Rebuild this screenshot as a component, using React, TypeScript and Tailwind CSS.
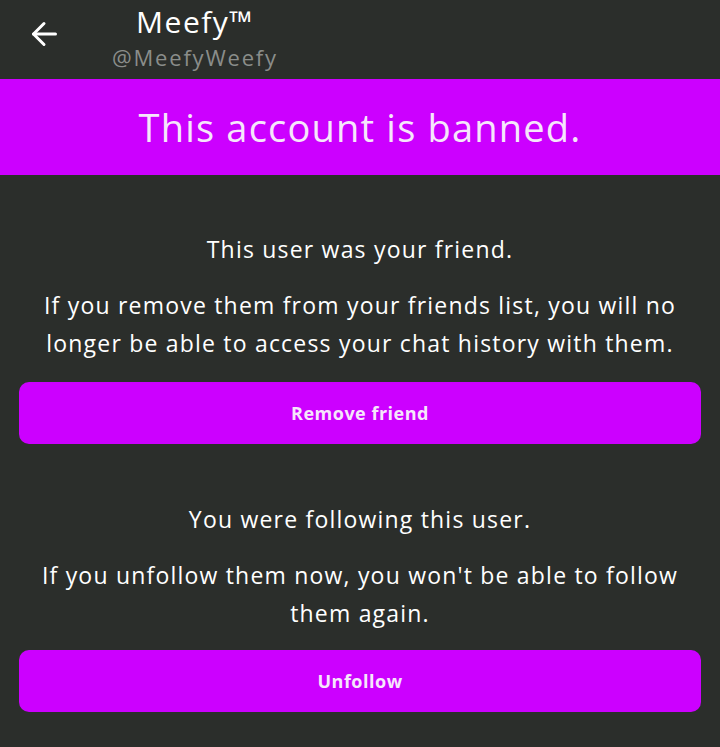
const font = { fontFamily: "'Open Sans', Lato, sans-serif" }

function BackArrow() {
  return (
    <svg width="26" height="26" viewBox="0 0 26 26" fill="none" stroke="currentColor" strokeWidth="3" strokeLinecap="round" strokeLinejoin="round">
      <path d="M24.5 13H2.5" />
      <path d="M13 2.5L2.5 13L13 23.5" />
    </svg>
  )
}

export default function App() {
  return (
    <div className="w-[720px] h-[747px] bg-[#2b2e2b] text-white overflow-hidden" style={font}>
      {/* Header */}
      <div className="h-[79px] flex items-center">
        <div className="w-[88px] flex justify-center -mt-[11px]">
          <BackArrow />
        </div>
        <div className="flex flex-col items-center ml-[24px] -mt-[5px]">
          <div className="text-[30px] leading-[41px] tracking-[1.5px]">Meefy™</div>
          <div className="text-[22px] leading-[31px] tracking-[1.8px] text-[#8a8d8a]">@MeefyWeefy</div>
        </div>
      </div>

      {/* Banned banner */}
      <div className="h-[96px] bg-[#cc00ff] flex items-center justify-center">
        <span className="text-[38px] tracking-[1.2px] text-[#f6e6fb]">This account is banned.</span>
      </div>

      {/* Friend section */}
      <div className="px-[19px] pt-[55px] flex flex-col items-center text-center">
        <p className="text-[23px] leading-[38px] tracking-[1.2px]">This user was your friend.</p>
        <p className="mt-[18px] text-[23px] leading-[38px] tracking-[1.2px] px-[10px]">
          If you remove them from your friends list, you will no longer be able to access your chat history with them.
        </p>
        <button className="mt-[20px] w-full h-[62px] rounded-[10px] bg-[#cc00ff] text-[18px] tracking-[0.5px] font-bold text-[#f6e6fb]">
          Remove friend
        </button>

        <p className="mt-[56px] text-[23px] leading-[38px] tracking-[1.2px]">You were following this user.</p>
        <p className="mt-[18px] text-[23px] leading-[38px] tracking-[1.2px] px-[10px]">
          If you unfollow them now, you won't be able to follow them again.
        </p>
        <button className="mt-[18px] w-full h-[62px] rounded-[10px] bg-[#cc00ff] text-[18px] tracking-[0.5px] font-bold text-[#f6e6fb]">
          Unfollow
        </button>
      </div>
    </div>
  )
}
